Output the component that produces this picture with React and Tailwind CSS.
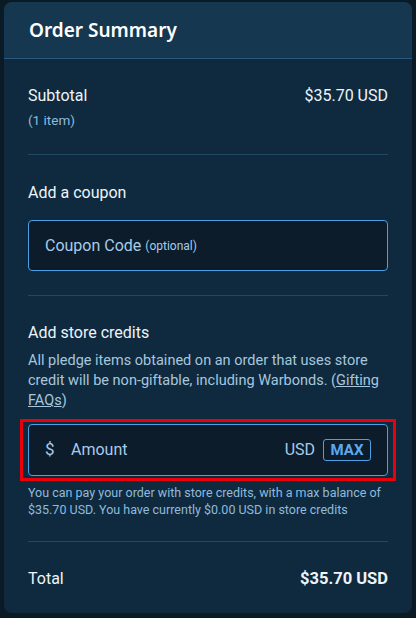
export default function App() {
  return (
    <div className="w-[416px] h-[618px] bg-[#0b1b26] pt-[2px] px-[4px]" style={{ fontFamily: "Roboto, 'Noto Sans', sans-serif" }}>
      <div className="w-[408px] h-[611px] rounded-[8px] bg-[#0f2a3e] overflow-hidden flex flex-col">
        <div className="h-[57px] bg-[#153850] border-b border-[#28597a] flex items-center px-[25px]">
          <span className="text-[19px] font-semibold text-white" style={{ fontFamily: "'Noto Sans', sans-serif" }}>Order Summary</span>
        </div>
        <div className="px-[24px] flex flex-col">
          <div className="pt-[27px] pb-[25px] border-b border-[#1f4862]">
            <div className="flex justify-between text-[16px] text-[#eef4f9] leading-[20px]">
              <span>Subtotal</span>
              <span>$35.70 USD</span>
            </div>
            <div className="text-[13.5px] text-[#8fbbdc] mt-[5px] leading-[18px]">(1 item)</div>
          </div>
          <div className="pt-[28px] pb-[24px] border-b border-[#1f4862]">
            <div className="text-[16px] text-[#eef4f9] leading-[20px]">Add a coupon</div>
            <div className="mt-[17px] h-[51px] rounded-[4px] border border-[#4c9fe3] bg-[#0c1c2a] flex items-center px-[16px]">
              <span className="text-[16px] text-[#a7cbe8]">Coupon Code</span>
              <span className="text-[12px] text-[#a7cbe8] ml-[4px]">(optional)</span>
            </div>
          </div>
          <div className="pt-[27px] pb-[23px] border-b border-[#1f4862]">
            <div className="text-[16px] text-[#eef4f9] leading-[20px]">Add store credits</div>
            <div className="text-[14.5px] text-[#a7c6de] leading-[20px] mt-[8px]">
              All pledge items obtained on an order that uses store credit will be non-giftable, including Warbonds. (<span className="underline">Gifting FAQs</span>)
            </div>
            <div className="mt-[8px] -mx-[8px] border-[3px] border-[#e8000b] px-[5px] py-[2px]">
              <div className="h-[52px] rounded-[4px] border border-[#4c9fe3] bg-[#0c1c2a] flex items-center pl-[16px] pr-[16px]">
                <span className="text-[17px] text-[#a7cbe8] w-[26px]">$</span>
                <span className="text-[16px] text-[#a7cbe8] flex-1">Amount</span>
                <span className="text-[16px] text-[#a7cbe8]">USD</span>
                <span className="ml-[8px] h-[22px] w-[48px] justify-center rounded-[3px] border border-[#4c9fe3] text-[#5aaaf0] text-[15px] font-bold flex items-center">MAX</span>
              </div>
            </div>
            <div className="text-[12.5px] text-[#8fbbdc] leading-[17px] mt-[3px]">
              You can pay your order with store credits, with a max balance of $35.70 USD. You have currently $0.00 USD in store credits
            </div>
          </div>
          <div className="pt-[27px] flex justify-between text-[16px] text-[#eef4f9] leading-[20px]">
            <span>Total</span>
            <span className="font-bold text-[16.5px]">$35.70 USD</span>
          </div>
        </div>
      </div>
    </div>
  );
}
